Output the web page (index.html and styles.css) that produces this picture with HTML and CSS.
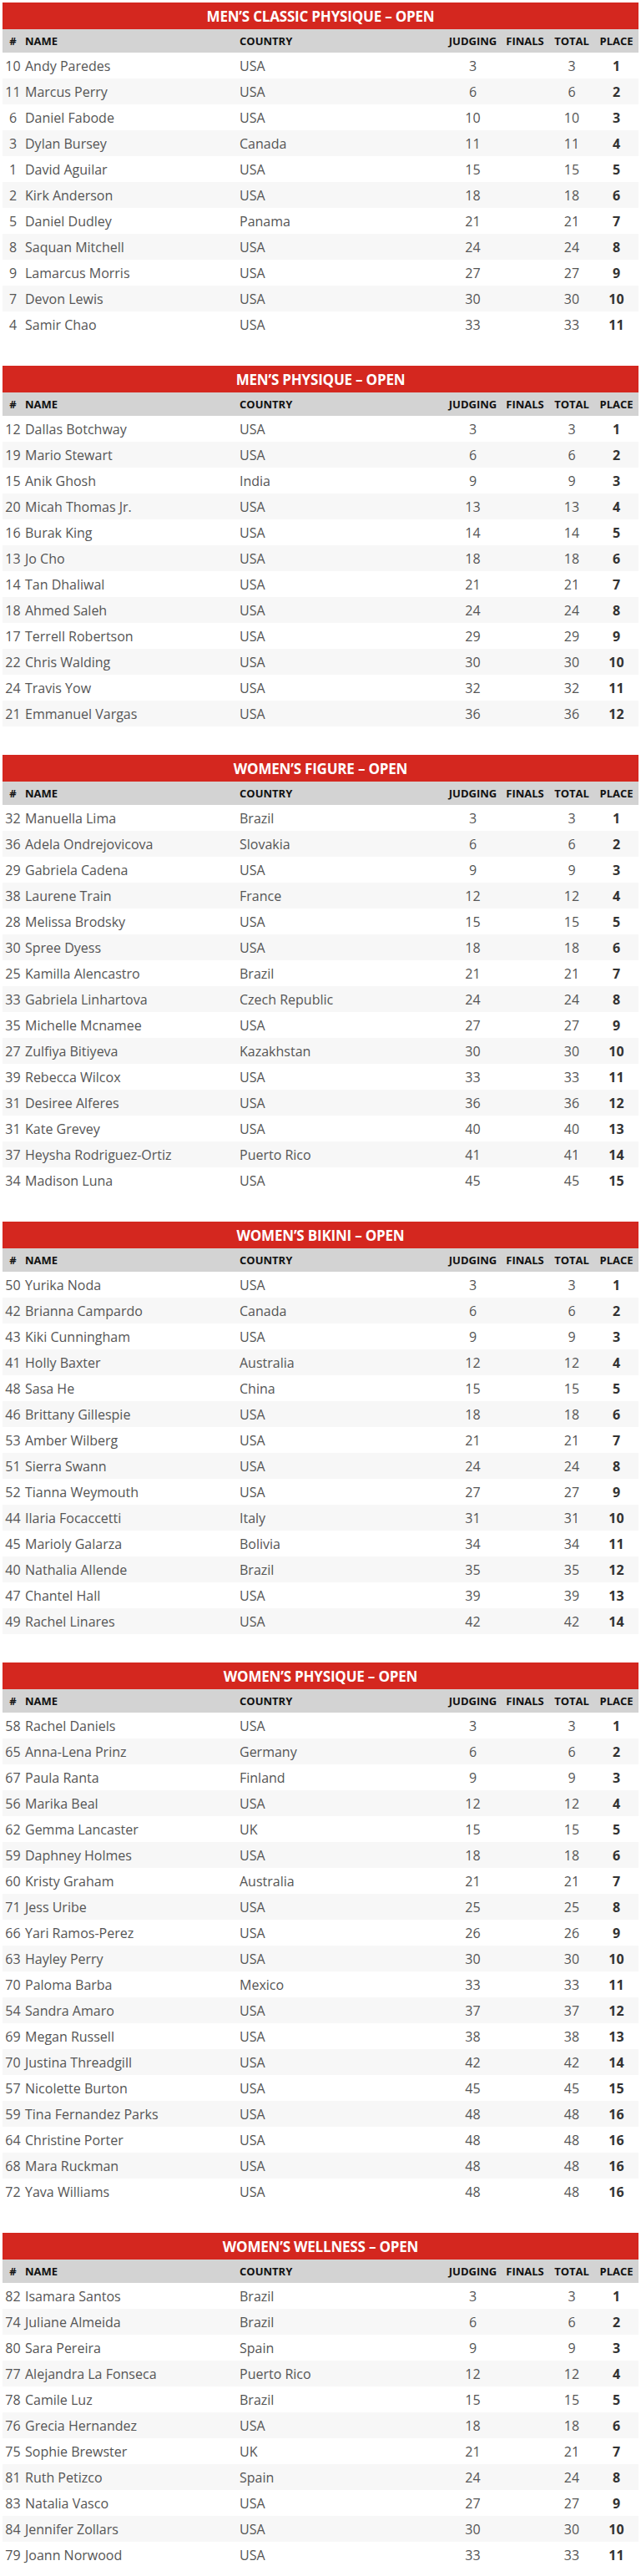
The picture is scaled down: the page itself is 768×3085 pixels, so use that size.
FILE: index.html
```html
<!DOCTYPE html>
<html lang="en">
<head>
<meta charset="utf-8">
<title>Results</title>
<link rel="stylesheet" href="styles.css">
</head>
<body>
<main class="results">

<section class="division">
<h2 class="division-title">MEN’S CLASSIC PHYSIQUE – OPEN</h2>
<table class="scores">
<colgroup><col class="c-num"><col class="c-name"><col class="c-country"><col class="c-judging"><col class="c-finals"><col class="c-total"><col class="c-place"></colgroup>
<thead><tr><th class="num">#</th><th>NAME</th><th>COUNTRY</th><th class="ctr">JUDGING</th><th class="ctr">FINALS</th><th class="ctr">TOTAL</th><th class="ctr">PLACE</th></tr></thead>
<tbody>
<tr><td class="num">10</td><td>Andy Paredes</td><td>USA</td><td class="ctr">3</td><td class="ctr"></td><td class="ctr">3</td><td class="place">1</td></tr>
<tr><td class="num">11</td><td>Marcus Perry</td><td>USA</td><td class="ctr">6</td><td class="ctr"></td><td class="ctr">6</td><td class="place">2</td></tr>
<tr><td class="num">6</td><td>Daniel Fabode</td><td>USA</td><td class="ctr">10</td><td class="ctr"></td><td class="ctr">10</td><td class="place">3</td></tr>
<tr><td class="num">3</td><td>Dylan Bursey</td><td>Canada</td><td class="ctr">11</td><td class="ctr"></td><td class="ctr">11</td><td class="place">4</td></tr>
<tr><td class="num">1</td><td>David Aguilar</td><td>USA</td><td class="ctr">15</td><td class="ctr"></td><td class="ctr">15</td><td class="place">5</td></tr>
<tr><td class="num">2</td><td>Kirk Anderson</td><td>USA</td><td class="ctr">18</td><td class="ctr"></td><td class="ctr">18</td><td class="place">6</td></tr>
<tr><td class="num">5</td><td>Daniel Dudley</td><td>Panama</td><td class="ctr">21</td><td class="ctr"></td><td class="ctr">21</td><td class="place">7</td></tr>
<tr><td class="num">8</td><td>Saquan Mitchell</td><td>USA</td><td class="ctr">24</td><td class="ctr"></td><td class="ctr">24</td><td class="place">8</td></tr>
<tr><td class="num">9</td><td>Lamarcus Morris</td><td>USA</td><td class="ctr">27</td><td class="ctr"></td><td class="ctr">27</td><td class="place">9</td></tr>
<tr><td class="num">7</td><td>Devon Lewis</td><td>USA</td><td class="ctr">30</td><td class="ctr"></td><td class="ctr">30</td><td class="place">10</td></tr>
<tr><td class="num">4</td><td>Samir Chao</td><td>USA</td><td class="ctr">33</td><td class="ctr"></td><td class="ctr">33</td><td class="place">11</td></tr>
</tbody>
</table>
</section>

<section class="division">
<h2 class="division-title">MEN’S PHYSIQUE – OPEN</h2>
<table class="scores">
<colgroup><col class="c-num"><col class="c-name"><col class="c-country"><col class="c-judging"><col class="c-finals"><col class="c-total"><col class="c-place"></colgroup>
<thead><tr><th class="num">#</th><th>NAME</th><th>COUNTRY</th><th class="ctr">JUDGING</th><th class="ctr">FINALS</th><th class="ctr">TOTAL</th><th class="ctr">PLACE</th></tr></thead>
<tbody>
<tr><td class="num">12</td><td>Dallas Botchway</td><td>USA</td><td class="ctr">3</td><td class="ctr"></td><td class="ctr">3</td><td class="place">1</td></tr>
<tr><td class="num">19</td><td>Mario Stewart</td><td>USA</td><td class="ctr">6</td><td class="ctr"></td><td class="ctr">6</td><td class="place">2</td></tr>
<tr><td class="num">15</td><td>Anik Ghosh</td><td>India</td><td class="ctr">9</td><td class="ctr"></td><td class="ctr">9</td><td class="place">3</td></tr>
<tr><td class="num">20</td><td>Micah Thomas Jr.</td><td>USA</td><td class="ctr">13</td><td class="ctr"></td><td class="ctr">13</td><td class="place">4</td></tr>
<tr><td class="num">16</td><td>Burak King</td><td>USA</td><td class="ctr">14</td><td class="ctr"></td><td class="ctr">14</td><td class="place">5</td></tr>
<tr><td class="num">13</td><td>Jo Cho</td><td>USA</td><td class="ctr">18</td><td class="ctr"></td><td class="ctr">18</td><td class="place">6</td></tr>
<tr><td class="num">14</td><td>Tan Dhaliwal</td><td>USA</td><td class="ctr">21</td><td class="ctr"></td><td class="ctr">21</td><td class="place">7</td></tr>
<tr><td class="num">18</td><td>Ahmed Saleh</td><td>USA</td><td class="ctr">24</td><td class="ctr"></td><td class="ctr">24</td><td class="place">8</td></tr>
<tr><td class="num">17</td><td>Terrell Robertson</td><td>USA</td><td class="ctr">29</td><td class="ctr"></td><td class="ctr">29</td><td class="place">9</td></tr>
<tr><td class="num">22</td><td>Chris Walding</td><td>USA</td><td class="ctr">30</td><td class="ctr"></td><td class="ctr">30</td><td class="place">10</td></tr>
<tr><td class="num">24</td><td>Travis Yow</td><td>USA</td><td class="ctr">32</td><td class="ctr"></td><td class="ctr">32</td><td class="place">11</td></tr>
<tr><td class="num">21</td><td>Emmanuel Vargas</td><td>USA</td><td class="ctr">36</td><td class="ctr"></td><td class="ctr">36</td><td class="place">12</td></tr>
</tbody>
</table>
</section>

<section class="division">
<h2 class="division-title">WOMEN’S FIGURE – OPEN</h2>
<table class="scores">
<colgroup><col class="c-num"><col class="c-name"><col class="c-country"><col class="c-judging"><col class="c-finals"><col class="c-total"><col class="c-place"></colgroup>
<thead><tr><th class="num">#</th><th>NAME</th><th>COUNTRY</th><th class="ctr">JUDGING</th><th class="ctr">FINALS</th><th class="ctr">TOTAL</th><th class="ctr">PLACE</th></tr></thead>
<tbody>
<tr><td class="num">32</td><td>Manuella Lima</td><td>Brazil</td><td class="ctr">3</td><td class="ctr"></td><td class="ctr">3</td><td class="place">1</td></tr>
<tr><td class="num">36</td><td>Adela Ondrejovicova</td><td>Slovakia</td><td class="ctr">6</td><td class="ctr"></td><td class="ctr">6</td><td class="place">2</td></tr>
<tr><td class="num">29</td><td>Gabriela Cadena</td><td>USA</td><td class="ctr">9</td><td class="ctr"></td><td class="ctr">9</td><td class="place">3</td></tr>
<tr><td class="num">38</td><td>Laurene Train</td><td>France</td><td class="ctr">12</td><td class="ctr"></td><td class="ctr">12</td><td class="place">4</td></tr>
<tr><td class="num">28</td><td>Melissa Brodsky</td><td>USA</td><td class="ctr">15</td><td class="ctr"></td><td class="ctr">15</td><td class="place">5</td></tr>
<tr><td class="num">30</td><td>Spree Dyess</td><td>USA</td><td class="ctr">18</td><td class="ctr"></td><td class="ctr">18</td><td class="place">6</td></tr>
<tr><td class="num">25</td><td>Kamilla Alencastro</td><td>Brazil</td><td class="ctr">21</td><td class="ctr"></td><td class="ctr">21</td><td class="place">7</td></tr>
<tr><td class="num">33</td><td>Gabriela Linhartova</td><td>Czech Republic</td><td class="ctr">24</td><td class="ctr"></td><td class="ctr">24</td><td class="place">8</td></tr>
<tr><td class="num">35</td><td>Michelle Mcnamee</td><td>USA</td><td class="ctr">27</td><td class="ctr"></td><td class="ctr">27</td><td class="place">9</td></tr>
<tr><td class="num">27</td><td>Zulfiya Bitiyeva</td><td>Kazakhstan</td><td class="ctr">30</td><td class="ctr"></td><td class="ctr">30</td><td class="place">10</td></tr>
<tr><td class="num">39</td><td>Rebecca Wilcox</td><td>USA</td><td class="ctr">33</td><td class="ctr"></td><td class="ctr">33</td><td class="place">11</td></tr>
<tr><td class="num">31</td><td>Desiree Alferes</td><td>USA</td><td class="ctr">36</td><td class="ctr"></td><td class="ctr">36</td><td class="place">12</td></tr>
<tr><td class="num">31</td><td>Kate Grevey</td><td>USA</td><td class="ctr">40</td><td class="ctr"></td><td class="ctr">40</td><td class="place">13</td></tr>
<tr><td class="num">37</td><td>Heysha Rodriguez-Ortiz</td><td>Puerto Rico</td><td class="ctr">41</td><td class="ctr"></td><td class="ctr">41</td><td class="place">14</td></tr>
<tr><td class="num">34</td><td>Madison Luna</td><td>USA</td><td class="ctr">45</td><td class="ctr"></td><td class="ctr">45</td><td class="place">15</td></tr>
</tbody>
</table>
</section>

<section class="division">
<h2 class="division-title">WOMEN’S BIKINI – OPEN</h2>
<table class="scores">
<colgroup><col class="c-num"><col class="c-name"><col class="c-country"><col class="c-judging"><col class="c-finals"><col class="c-total"><col class="c-place"></colgroup>
<thead><tr><th class="num">#</th><th>NAME</th><th>COUNTRY</th><th class="ctr">JUDGING</th><th class="ctr">FINALS</th><th class="ctr">TOTAL</th><th class="ctr">PLACE</th></tr></thead>
<tbody>
<tr><td class="num">50</td><td>Yurika Noda</td><td>USA</td><td class="ctr">3</td><td class="ctr"></td><td class="ctr">3</td><td class="place">1</td></tr>
<tr><td class="num">42</td><td>Brianna Campardo</td><td>Canada</td><td class="ctr">6</td><td class="ctr"></td><td class="ctr">6</td><td class="place">2</td></tr>
<tr><td class="num">43</td><td>Kiki Cunningham</td><td>USA</td><td class="ctr">9</td><td class="ctr"></td><td class="ctr">9</td><td class="place">3</td></tr>
<tr><td class="num">41</td><td>Holly Baxter</td><td>Australia</td><td class="ctr">12</td><td class="ctr"></td><td class="ctr">12</td><td class="place">4</td></tr>
<tr><td class="num">48</td><td>Sasa He</td><td>China</td><td class="ctr">15</td><td class="ctr"></td><td class="ctr">15</td><td class="place">5</td></tr>
<tr><td class="num">46</td><td>Brittany Gillespie</td><td>USA</td><td class="ctr">18</td><td class="ctr"></td><td class="ctr">18</td><td class="place">6</td></tr>
<tr><td class="num">53</td><td>Amber Wilberg</td><td>USA</td><td class="ctr">21</td><td class="ctr"></td><td class="ctr">21</td><td class="place">7</td></tr>
<tr><td class="num">51</td><td>Sierra Swann</td><td>USA</td><td class="ctr">24</td><td class="ctr"></td><td class="ctr">24</td><td class="place">8</td></tr>
<tr><td class="num">52</td><td>Tianna Weymouth</td><td>USA</td><td class="ctr">27</td><td class="ctr"></td><td class="ctr">27</td><td class="place">9</td></tr>
<tr><td class="num">44</td><td>Ilaria Focaccetti</td><td>Italy</td><td class="ctr">31</td><td class="ctr"></td><td class="ctr">31</td><td class="place">10</td></tr>
<tr><td class="num">45</td><td>Marioly Galarza</td><td>Bolivia</td><td class="ctr">34</td><td class="ctr"></td><td class="ctr">34</td><td class="place">11</td></tr>
<tr><td class="num">40</td><td>Nathalia Allende</td><td>Brazil</td><td class="ctr">35</td><td class="ctr"></td><td class="ctr">35</td><td class="place">12</td></tr>
<tr><td class="num">47</td><td>Chantel Hall</td><td>USA</td><td class="ctr">39</td><td class="ctr"></td><td class="ctr">39</td><td class="place">13</td></tr>
<tr><td class="num">49</td><td>Rachel Linares</td><td>USA</td><td class="ctr">42</td><td class="ctr"></td><td class="ctr">42</td><td class="place">14</td></tr>
</tbody>
</table>
</section>

<section class="division">
<h2 class="division-title">WOMEN’S PHYSIQUE – OPEN</h2>
<table class="scores">
<colgroup><col class="c-num"><col class="c-name"><col class="c-country"><col class="c-judging"><col class="c-finals"><col class="c-total"><col class="c-place"></colgroup>
<thead><tr><th class="num">#</th><th>NAME</th><th>COUNTRY</th><th class="ctr">JUDGING</th><th class="ctr">FINALS</th><th class="ctr">TOTAL</th><th class="ctr">PLACE</th></tr></thead>
<tbody>
<tr><td class="num">58</td><td>Rachel Daniels</td><td>USA</td><td class="ctr">3</td><td class="ctr"></td><td class="ctr">3</td><td class="place">1</td></tr>
<tr><td class="num">65</td><td>Anna-Lena Prinz</td><td>Germany</td><td class="ctr">6</td><td class="ctr"></td><td class="ctr">6</td><td class="place">2</td></tr>
<tr><td class="num">67</td><td>Paula Ranta</td><td>Finland</td><td class="ctr">9</td><td class="ctr"></td><td class="ctr">9</td><td class="place">3</td></tr>
<tr><td class="num">56</td><td>Marika Beal</td><td>USA</td><td class="ctr">12</td><td class="ctr"></td><td class="ctr">12</td><td class="place">4</td></tr>
<tr><td class="num">62</td><td>Gemma Lancaster</td><td>UK</td><td class="ctr">15</td><td class="ctr"></td><td class="ctr">15</td><td class="place">5</td></tr>
<tr><td class="num">59</td><td>Daphney Holmes</td><td>USA</td><td class="ctr">18</td><td class="ctr"></td><td class="ctr">18</td><td class="place">6</td></tr>
<tr><td class="num">60</td><td>Kristy Graham</td><td>Australia</td><td class="ctr">21</td><td class="ctr"></td><td class="ctr">21</td><td class="place">7</td></tr>
<tr><td class="num">71</td><td>Jess Uribe</td><td>USA</td><td class="ctr">25</td><td class="ctr"></td><td class="ctr">25</td><td class="place">8</td></tr>
<tr><td class="num">66</td><td>Yari Ramos-Perez</td><td>USA</td><td class="ctr">26</td><td class="ctr"></td><td class="ctr">26</td><td class="place">9</td></tr>
<tr><td class="num">63</td><td>Hayley Perry</td><td>USA</td><td class="ctr">30</td><td class="ctr"></td><td class="ctr">30</td><td class="place">10</td></tr>
<tr><td class="num">70</td><td>Paloma Barba</td><td>Mexico</td><td class="ctr">33</td><td class="ctr"></td><td class="ctr">33</td><td class="place">11</td></tr>
<tr><td class="num">54</td><td>Sandra Amaro</td><td>USA</td><td class="ctr">37</td><td class="ctr"></td><td class="ctr">37</td><td class="place">12</td></tr>
<tr><td class="num">69</td><td>Megan Russell</td><td>USA</td><td class="ctr">38</td><td class="ctr"></td><td class="ctr">38</td><td class="place">13</td></tr>
<tr><td class="num">70</td><td>Justina Threadgill</td><td>USA</td><td class="ctr">42</td><td class="ctr"></td><td class="ctr">42</td><td class="place">14</td></tr>
<tr><td class="num">57</td><td>Nicolette Burton</td><td>USA</td><td class="ctr">45</td><td class="ctr"></td><td class="ctr">45</td><td class="place">15</td></tr>
<tr><td class="num">59</td><td>Tina Fernandez Parks</td><td>USA</td><td class="ctr">48</td><td class="ctr"></td><td class="ctr">48</td><td class="place">16</td></tr>
<tr><td class="num">64</td><td>Christine Porter</td><td>USA</td><td class="ctr">48</td><td class="ctr"></td><td class="ctr">48</td><td class="place">16</td></tr>
<tr><td class="num">68</td><td>Mara Ruckman</td><td>USA</td><td class="ctr">48</td><td class="ctr"></td><td class="ctr">48</td><td class="place">16</td></tr>
<tr><td class="num">72</td><td>Yava Williams</td><td>USA</td><td class="ctr">48</td><td class="ctr"></td><td class="ctr">48</td><td class="place">16</td></tr>
</tbody>
</table>
</section>

<section class="division">
<h2 class="division-title">WOMEN’S WELLNESS – OPEN</h2>
<table class="scores">
<colgroup><col class="c-num"><col class="c-name"><col class="c-country"><col class="c-judging"><col class="c-finals"><col class="c-total"><col class="c-place"></colgroup>
<thead><tr><th class="num">#</th><th>NAME</th><th>COUNTRY</th><th class="ctr">JUDGING</th><th class="ctr">FINALS</th><th class="ctr">TOTAL</th><th class="ctr">PLACE</th></tr></thead>
<tbody>
<tr><td class="num">82</td><td>Isamara Santos</td><td>Brazil</td><td class="ctr">3</td><td class="ctr"></td><td class="ctr">3</td><td class="place">1</td></tr>
<tr><td class="num">74</td><td>Juliane Almeida</td><td>Brazil</td><td class="ctr">6</td><td class="ctr"></td><td class="ctr">6</td><td class="place">2</td></tr>
<tr><td class="num">80</td><td>Sara Pereira</td><td>Spain</td><td class="ctr">9</td><td class="ctr"></td><td class="ctr">9</td><td class="place">3</td></tr>
<tr><td class="num">77</td><td>Alejandra La Fonseca</td><td>Puerto Rico</td><td class="ctr">12</td><td class="ctr"></td><td class="ctr">12</td><td class="place">4</td></tr>
<tr><td class="num">78</td><td>Camile Luz</td><td>Brazil</td><td class="ctr">15</td><td class="ctr"></td><td class="ctr">15</td><td class="place">5</td></tr>
<tr><td class="num">76</td><td>Grecia Hernandez</td><td>USA</td><td class="ctr">18</td><td class="ctr"></td><td class="ctr">18</td><td class="place">6</td></tr>
<tr><td class="num">75</td><td>Sophie Brewster</td><td>UK</td><td class="ctr">21</td><td class="ctr"></td><td class="ctr">21</td><td class="place">7</td></tr>
<tr><td class="num">81</td><td>Ruth Petizco</td><td>Spain</td><td class="ctr">24</td><td class="ctr"></td><td class="ctr">24</td><td class="place">8</td></tr>
<tr><td class="num">83</td><td>Natalia Vasco</td><td>USA</td><td class="ctr">27</td><td class="ctr"></td><td class="ctr">27</td><td class="place">9</td></tr>
<tr><td class="num">84</td><td>Jennifer Zollars</td><td>USA</td><td class="ctr">30</td><td class="ctr"></td><td class="ctr">30</td><td class="place">10</td></tr>
<tr><td class="num">79</td><td>Joann Norwood</td><td>USA</td><td class="ctr">33</td><td class="ctr"></td><td class="ctr">33</td><td class="place">11</td></tr>
</tbody>
</table>
</section>

</main>
</body>
</html>
```

FILE: styles.css
```css
* { box-sizing: border-box; }

html, body {
  margin: 0;
  padding: 0;
  background: #ffffff;
}

body {
  font-family: "Open Sans", "Liberation Sans", sans-serif;
  color: #555555;
}

.results {
  padding: 3px 3px 6px;
  display: flex;
  flex-direction: column;
  gap: 34px;
}

.division {
  display: flex;
  flex-direction: column;
}

.division-title {
  margin: 0;
  height: 32px;
  background: #d4271f;
  color: #ffffff;
  font-size: 17px;
  font-weight: 700;
  display: flex;
  align-items: center;
  justify-content: center;
  letter-spacing: -0.2px;
}

.scores {
  width: 100%;
  border-collapse: collapse;
  table-layout: fixed;
}

.c-num { width: 23px; }
.c-name { width: 257px; }
.c-country { width: 250px; }
.c-judging { width: 67px; }
.c-finals { width: 58px; }
.c-total { width: 54px; }
.c-place { width: 53px; }

.scores th {
  height: 28px;
  background: #d3d3d3;
  color: #111111;
  font-size: 13px;
  font-weight: 700;
  text-align: left;
  padding: 0 4px;
  white-space: nowrap;
}

.scores td {
  height: 31px;
  font-size: 16px;
  padding: 0 4px;
  white-space: nowrap;
  color: #555555;
}

.scores tbody tr:nth-child(even) td {
  background: #f7f7f7;
}

.scores .num {
  text-align: center;
  padding: 0 0 0 2px;
}

.scores .ctr {
  text-align: center;
}

.scores .place {
  text-align: center;
  font-weight: 700;
  color: #333333;
}
```
